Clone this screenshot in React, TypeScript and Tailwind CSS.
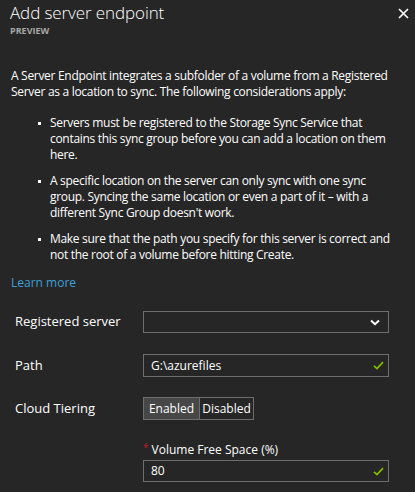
import React from "react";

const FONT = { fontFamily: '"Open Sans", "Noto Sans", "Liberation Sans", sans-serif' };

function Check() {
  return (
    <svg width="11" height="9" viewBox="0 0 11 9" className="shrink-0">
      <path d="M1 4.8 L4 7.6 L10 1.2" fill="none" stroke="#7fba00" strokeWidth="1.8" />
    </svg>
  );
}

function Chevron() {
  return (
    <svg width="10" height="7" viewBox="0 0 10 7" className="shrink-0">
      <path d="M1 1.5 L5 5.2 L9 1.5" fill="none" stroke="#ffffff" strokeWidth="2" />
    </svg>
  );
}

const bullets = [
  "Servers must be registered to the Storage Sync Service that contains this sync group before you can add a location on them here.",
  "A specific location on the server can only sync with one sync group. Syncing the same location or even a part of it – with a different Sync Group doesn't work.",
  "Make sure that the path you specify for this server is correct and not the root of a volume before hitting Create.",
];

export default function App() {
  return (
    <div className="w-[415px] h-[492px] overflow-hidden bg-[#262626] text-white" style={FONT}>
      {/* Header */}
      <div className="flex justify-between pl-[10px] pr-[5px] pt-[1px]">
        <div>
          <h1 className="text-[17px] font-light leading-[24px] tracking-[-0.1px]">Add server endpoint</h1>
          <div className="text-[9px] font-bold leading-[12px] text-[#a8a8a8]">PREVIEW</div>
        </div>
        <button className="mt-[6px] h-[12px] w-[12px]">
          <svg width="11" height="11" viewBox="0 0 11 11">
            <path d="M1 1 L10 10 M10 1 L1 10" stroke="#ffffff" strokeWidth="1.6" />
          </svg>
        </button>
      </div>

      {/* Description */}
      <div className="text-[12px] leading-[16px] tracking-[-0.3px]">
        <p className="mt-[31px] pl-[11px] pr-[18px]">
          A Server Endpoint integrates a subfolder of a volume from a Registered Server as a location to sync. The following considerations apply:
        </p>

        <ul className="mt-[15px] flex flex-col gap-[10px] pl-[38px] pr-[16px]">
          {bullets.map((b) => (
            <li key={b} className="flex gap-[9px]">
              <span className="mt-[7px] h-[3px] w-[3px] shrink-0 bg-white" />
              <span>{b}</span>
            </li>
          ))}
        </ul>

        <a className="mt-[12px] block px-[11px] tracking-normal text-[#3ba0d8]">Learn more</a>
      </div>

      {/* Form */}
      <div className="mt-[20px] flex flex-col pl-[15px] text-[13px]">
        <div className="flex items-center">
          <span className="w-[128px]">Registered server</span>
          <div className="flex h-[22px] w-[246px] items-center justify-end border border-[#6e6e6e] pr-[8px]">
            <Chevron />
          </div>
        </div>

        <div className="mt-[21px] flex items-center">
          <span className="w-[128px]">Path</span>
          <div className="flex h-[23px] w-[246px] items-center justify-between border border-[#6e6e6e] pl-[7px] pr-[4px] text-[12px]">
            <span>G:\azurefiles</span>
            <Check />
          </div>
        </div>

        <div className="mt-[20px] flex items-center">
          <span className="w-[128px]">Cloud Tiering</span>
          <div className="flex h-[23px] border border-[#6e6e6e] text-[12px]">
            <span className="flex w-[55px] items-center justify-center bg-[#474747]">Enabled</span>
            <span className="flex w-[54px] items-center justify-center border-l border-[#6e6e6e]">Disabled</span>
          </div>
        </div>

        <div className="ml-[128px] mt-[22px] flex flex-col">
          <div className="flex items-start gap-[3px] text-[12px] leading-[16px]">
            <span className="text-[10px] leading-[10px] text-[#c0202a]">*</span>
            <span>Volume Free Space (%)</span>
          </div>
          <div className="mt-[2px] flex h-[22px] w-[246px] items-center justify-between border border-[#6e6e6e] pl-[7px] pr-[4px] text-[12px]">
            <span>80</span>
            <Check />
          </div>
        </div>
      </div>
    </div>
  );
}
